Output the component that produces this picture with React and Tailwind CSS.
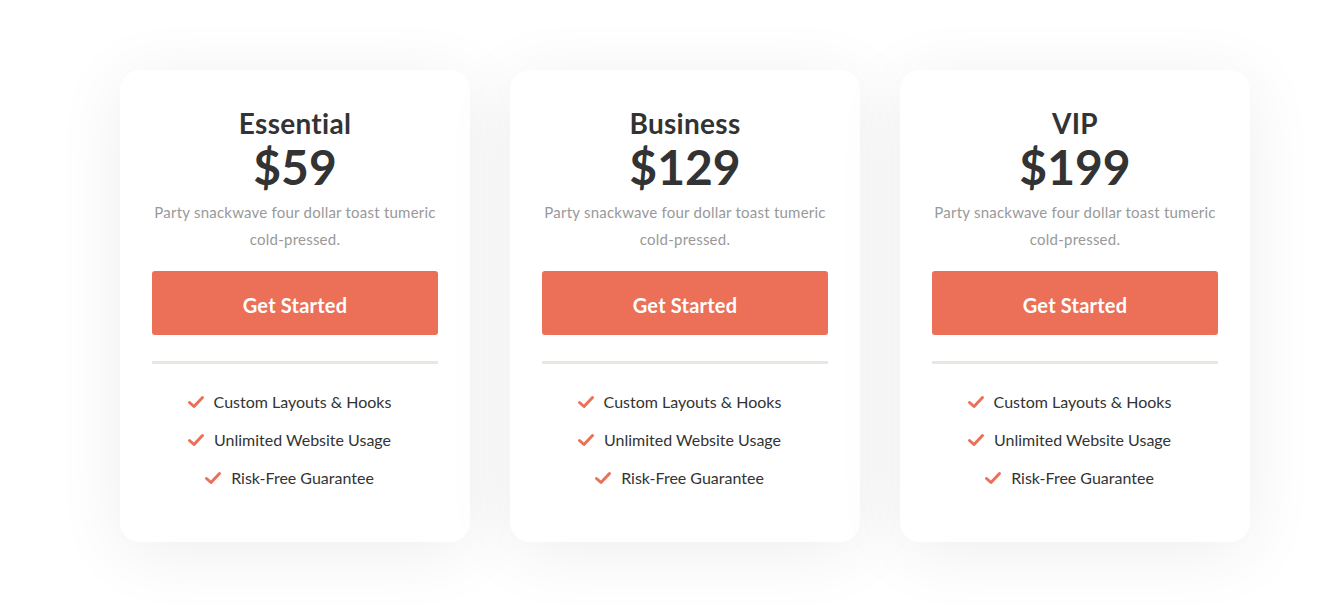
import React from 'react';

const plans = [
  { name: 'Essential', price: '$59' },
  { name: 'Business', price: '$129' },
  { name: 'VIP', price: '$199' },
];

const features = ['Custom Layouts & Hooks', 'Unlimited Website Usage', 'Risk-Free Guarantee'];

const CheckIcon = () => (
  <svg width="18" height="14" viewBox="0 0 18 14" fill="none" className="shrink-0">
    <path d="M2.5 7.5 L7 11.5 L15.5 2.5" stroke="#ec6f58" strokeWidth="3" strokeLinecap="round" strokeLinejoin="round" />
  </svg>
);

const PlanCard = ({ name, price }) => (
  <div className="w-[350px] h-[472px] bg-white rounded-[20px] shadow-[0_10px_70px_rgba(0,0,0,0.07)] px-8 pt-[38px] flex flex-col items-center">
    <h2 className="text-[28px] leading-[30px] font-bold tracking-[0.01em] text-[#333]">{name}</h2>
    <div className="text-[48px] leading-[56px] font-bold text-[#333] mt-[1px]">{price}</div>
    <p className="text-[15px] leading-[27px] tracking-[0.015em] text-[#999] text-center mt-[4px]">
      Party snackwave four dollar toast tumeric cold-pressed.
    </p>
    <button className="mt-[18px] w-full h-[64px] pt-[3px] bg-[#ec6f58] rounded-[3px] text-white text-[20px] font-bold tracking-[0.01em]">
      Get Started
    </button>
    <div className="w-full h-[3px] bg-[#ece6e0] mt-[26px]" />
    <ul className="mt-[27px] -ml-3 flex flex-col items-center gap-[16px]">
      {features.map((f) => (
        <li key={f} className="flex items-center gap-[9px] text-[16px] leading-[22px] text-[#333]">
          <CheckIcon />
          <span>{f}</span>
        </li>
      ))}
    </ul>
  </div>
);

export default function App() {
  return (
    <div className="min-h-[615px] bg-white pl-[120px] pt-[70px] flex gap-10" style={{ fontFamily: 'Lato, "Open Sans", sans-serif' }}>
      {plans.map((p) => (
        <PlanCard key={p.name} {...p} />
      ))}
    </div>
  );
}
